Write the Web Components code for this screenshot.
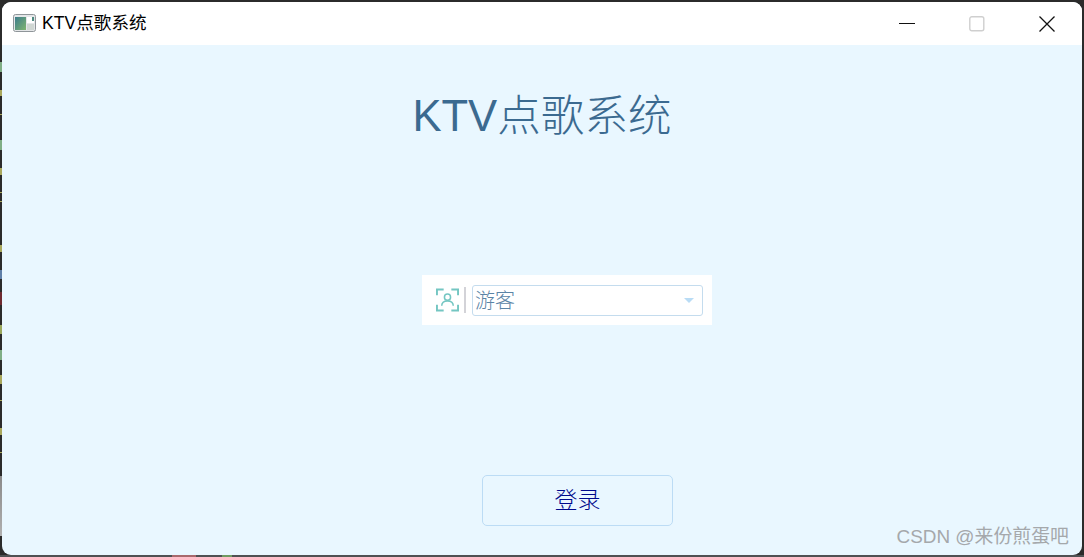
<!DOCTYPE html>
<html lang="zh"><head><meta charset="utf-8"><title>KTV点歌系统</title>
<style>
html,body{margin:0;height:100%;overflow:hidden}
body{background:
 linear-gradient(#a8696d,#a8696d) 172px 100%/24px 2px no-repeat,
 linear-gradient(#6f9a62,#6f9a62) 222px 100%/10px 2px no-repeat,
 linear-gradient(#4f5153,#4f5153) 0 100%/100% 2px no-repeat,
 linear-gradient(#8a8a8a,#b0b0b0) 0 476px/2px 60px no-repeat,
 linear-gradient(#7fae86,#7fae86) 0 62px/2px 10px no-repeat,
 linear-gradient(#a9a85c,#a9a85c) 0 90px/2px 6px no-repeat,
 linear-gradient(#a9a85c,#a9a85c) 0 114px/2px 1px no-repeat,
 linear-gradient(#7fae86,#7fae86) 0 140px/2px 10px no-repeat,
 linear-gradient(#a9a85c,#a9a85c) 0 168px/2px 7px no-repeat,
 linear-gradient(#a9a85c,#a9a85c) 0 192px/2px 1px no-repeat,
 linear-gradient(#a9a85c,#a9a85c) 0 201px/2px 1px no-repeat,
 linear-gradient(#a9a85c,#a9a85c) 0 245px/2px 7px no-repeat,
 linear-gradient(#5f7fa8,#5f7fa8) 0 270px/2px 9px no-repeat,
 linear-gradient(#6e2a30,#6e2a30) 0 292px/2px 13px no-repeat,
 linear-gradient(#9aa85c,#9aa85c) 0 325px/2px 9px no-repeat,
 linear-gradient(#7fae86,#7fae86) 0 350px/2px 10px no-repeat,
 linear-gradient(#a9a85c,#a9a85c) 0 375px/2px 9px no-repeat,
 linear-gradient(#a9a85c,#a9a85c) 0 400px/2px 1px no-repeat,
 linear-gradient(#a9a85c,#a9a85c) 0 428px/2px 7px no-repeat,
 linear-gradient(#a9a85c,#a9a85c) 0 452px/2px 1px no-repeat,
 #2b2b2b;
 font-family:"Liberation Sans","Noto Sans CJK SC",sans-serif}
ktv-window{width:1080px;height:553px;margin:2px 0 0 2px}
</style></head><body>
<ktv-window>
 <ktv-titlebar slot="bar">KTV点歌系统</ktv-titlebar>
 <ktv-title>KTV点歌系统</ktv-title>
 <ktv-user-row value="游客"></ktv-user-row>
 <ktv-button>登录</ktv-button>
 <ktv-mark>CSDN @来份煎蛋吧</ktv-mark>
</ktv-window>
<script>
function def(name,html,init){customElements.define(name,class extends HTMLElement{constructor(){super();this.attachShadow({mode:"open"}).innerHTML=html;if(init)init(this)}})}
def("ktv-window",`<style>
:host{display:flex;flex-direction:column;position:relative;background:#e9f7ff;border-radius:9px;overflow:hidden}
main{flex:1;display:flex;flex-direction:column;align-items:center;min-height:0}
</style><slot name="bar"></slot><main><slot></slot></main>`);
def("ktv-titlebar",`<style>
:host{display:flex;align-items:center;height:43px;flex:none;background:#fff;color:#000;font-size:17.6px;font-family:"Liberation Sans","Noto Sans CJK SC",sans-serif}
.ic{margin:-2px 5px 0 11px;display:block}
.t{flex:1;position:relative;top:-2px}
.b{width:70px;height:43px;display:flex;align-items:center;justify-content:center}
.b svg{display:block}
</style>
<svg class="ic" width="24" height="20" viewBox="0 0 24 20"><defs><linearGradient id="g" x1="0" y1="0" x2="1" y2="1"><stop offset="0" stop-color="#3c7c8c"/><stop offset="1" stop-color="#7fb56f"/></linearGradient></defs><rect x=".5" y="1.5" width="22" height="17" rx="2" fill="#e4e6e8" stroke="#8f9599"/><rect x="2" y="4" width="11" height="13" fill="url(#g)"/><rect x="14" y="4" width="7" height="6" fill="#fff"/><rect x="14" y="11" width="7" height="6" fill="#cfd6d2"/><rect x="19" y="4" width="2" height="4" fill="#4f8a80"/></svg>
<span class="t"><slot></slot></span>
<div class="b"><svg width="16" height="2"><rect width="16" height="1" y="0" fill="#111"/></svg></div>
<div class="b"><svg width="16" height="16"><rect x=".8" y=".8" width="14" height="14" rx="2" fill="none" stroke="#cfcfcf" stroke-width="1.4"/></svg></div>
<div class="b"><svg width="16" height="16"><path d="M.5.5 15.5 15.5M15.5.5.5 15.5" stroke="#111" stroke-width="1.3" fill="none"/></svg></div>`,h=>h.setAttribute("slot","bar"));
def("ktv-title",`<style>
:host{display:block;margin-top:46px;color:#3b6a90;font-size:43.6px;line-height:50px;font-weight:300;font-family:"Liberation Sans","Noto Sans CJK SC",sans-serif;white-space:nowrap}
</style><slot></slot>`);
def("ktv-user-row",`<style>
:host{display:flex;align-items:center;width:290px;height:50px;box-sizing:border-box;background:#fff;margin:134px 0 0 50px;padding:0 9px 0 14px}
svg{display:block;flex:none}
.sep{width:2px;height:26px;background:#d3d3d8;margin:0 6px 0 5px;flex:none}
.sel{flex:1;height:31px;box-sizing:border-box;border:1px solid #c4dcee;border-radius:3px;display:flex;align-items:center;padding:0 8px 2px 2px;color:#5a84a6;font-size:20px;font-weight:300;font-family:"Noto Sans CJK SC",sans-serif}
.v{flex:1}
.arr{width:0;height:0;border:5px solid transparent;border-top:5px solid #b9dcf5;border-bottom:0;margin-top:2px}
</style>
<svg width="23" height="24" viewBox="0 0 24 24" fill="none" stroke="#74c6c2" stroke-width="2"><path d="M1 7V1H8M16 1H23V7M1 17V23H8M16 23H23V17"/><circle cx="12" cy="9" r="3.2" stroke-width="1.6"/><path d="M6 18C6 14.5 9 13 12 13S18 14.5 18 18" stroke-width="1.6"/></svg>
<div class="sep"></div><div class="sel"><span class="v"></span><span class="arr"></span></div>`,h=>{h.shadowRoot.querySelector(".v").textContent=h.getAttribute("value")});
def("ktv-button",`<style>
:host{display:flex;align-items:center;justify-content:center;width:191px;height:51px;box-sizing:border-box;margin:150px 0 0 71px;padding-bottom:5px;border:1px solid #bcdcf5;border-radius:5px;color:#000a8c;font-size:23px;font-weight:300;font-family:"Noto Sans CJK SC",sans-serif}
</style><slot></slot>`);
def("ktv-mark",`<style>
:host{position:absolute;right:13px;bottom:5px;color:#a5a8ab;font-size:18.9px;line-height:26px;font-family:"Liberation Sans","Noto Sans CJK SC",sans-serif;white-space:nowrap}
</style><slot></slot>`);
</script>
</body></html>
